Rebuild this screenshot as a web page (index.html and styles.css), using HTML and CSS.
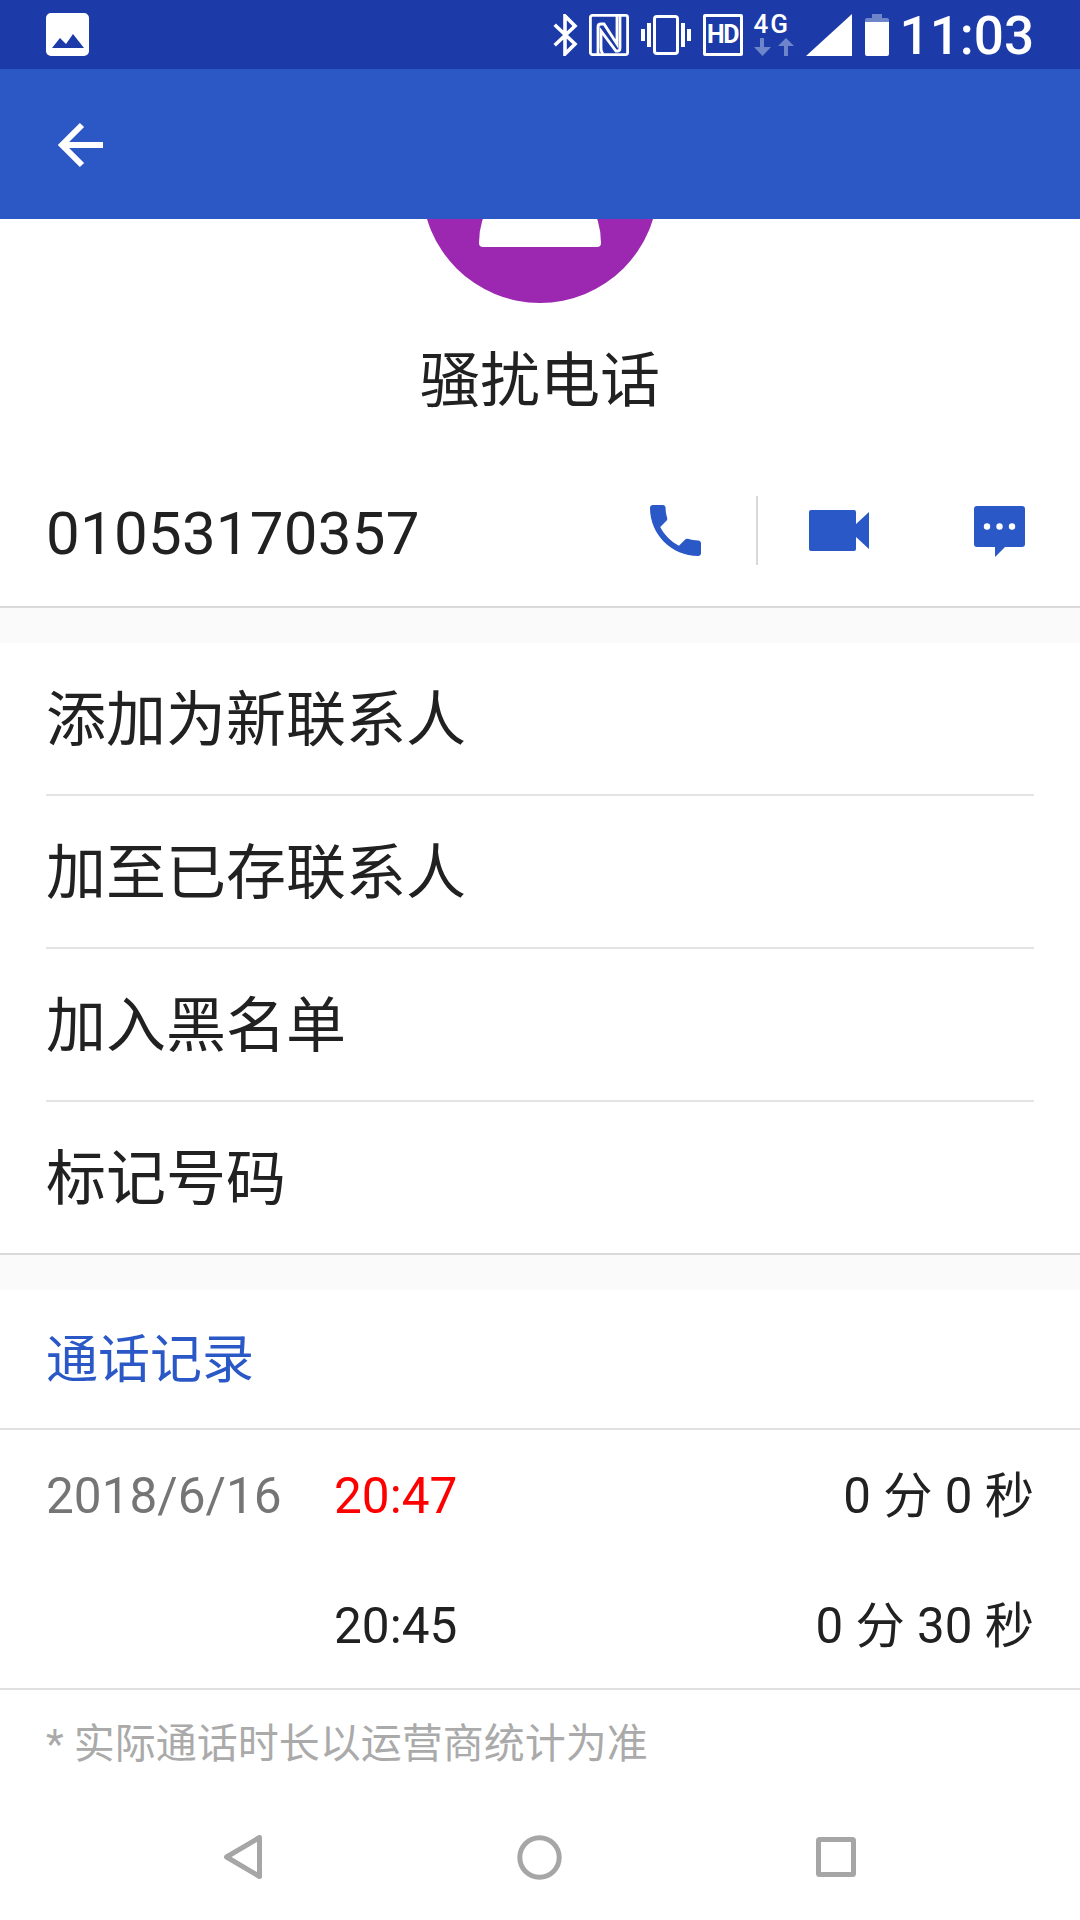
FILE: index.html
```html
<!DOCTYPE html>
<html lang="zh-CN">
<head>
<meta charset="utf-8">
<title>骚扰电话</title>
<link rel="stylesheet" href="styles.css">
</head>
<body>
<div class="screen">
  <header class="status-bar">
    <svg class="st-image" width="43" height="43" viewBox="0 0 43 43"><path fill="#fff" fill-rule="evenodd" d="M5 0h33a5 5 0 0 1 5 5v33a5 5 0 0 1-5 5H5a5 5 0 0 1-5-5V5a5 5 0 0 1 5-5zM6 35h32L27 21l-7 10-6-6z"/></svg>
    <div class="status-right">
      <svg width="25" height="42" viewBox="0 0 25 42"><path fill="none" stroke="#fff" stroke-width="3.600" stroke-linecap="square" d="M3 12l19 18-10 10V2l10 10L3 30"/></svg>
      <svg class="st-nfc" width="40" height="42" viewBox="0 0 40 42"><g fill="none" stroke="#fff" stroke-width="2.800"><rect x="1.400" y="1.400" width="37.200" height="39.200" rx="2"/><path d="M9 40V13q0-3 3-3h3l13 20V2"/><path d="M14 40q-2-2-2-6V17l15 20h2q2 0 2-3V2"/></g></svg>
      <svg width="52" height="40" viewBox="0 0 52 40"><g fill="#fff"><rect x="1" y="14" width="4" height="12"/><rect x="47" y="14" width="4" height="12"/><rect x="7" y="8" width="4" height="24"/><rect x="41" y="8" width="4" height="24"/></g><rect x="14.500" y="1.500" width="23" height="37" rx="2.500" fill="none" stroke="#fff" stroke-width="3"/></svg>
      <div class="st-hd">HD</div>
      <div class="st-net">
        <span class="st-4g">4G</span>
        <svg width="40" height="18" viewBox="0 0 40 18"><g fill="#6e85c9"><path d="M6 0h4v9h7l-8.500 9L0 9h6z"/><path d="M30 18h4V8h6L32 0l-8 8h6z"/></g></svg>
      </div>
      <svg class="st-signal" width="46" height="42" viewBox="0 0 46 42"><path fill="#fff" d="M46 0v42H0z"/></svg>
      <svg class="st-battery" width="24" height="42" viewBox="0 0 24 42"><path fill="#6e85c9" d="M7 0h10v4h5a2 2 0 0 1 2 2v3H0V6a2 2 0 0 1 2-2h5z"/><path fill="#fff" d="M0 8h24v32a2 2 0 0 1-2 2H2a2 2 0 0 1-2-2z"/></svg>
      <span class="st-time">11:03</span>
    </div>
  </header>
  <div class="toolbar">
    <svg width="72" height="72" viewBox="0 0 72 72"><path fill="none" stroke="#fff" stroke-width="6" d="M57 37H16M36 17L16 37l20 20"/></svg>
  </div>
  <main class="content">
    <div class="avatar">
      <div class="avatar-glyph"></div>
    </div>
    <h1 class="name">骚扰电话</h1>
    <section class="number-row">
      <span class="number">01053170357</span>
      <svg class="ic-phone" width="51" height="51" viewBox="3 3 18 18"><path fill="#2b58c7" d="M6.620 10.790c1.440 2.830 3.760 5.140 6.590 6.590l2.200-2.200c.27-.27.67-.36 1.020-.24 1.120.37 2.330.57 3.570.57.55 0 1 .45 1 1V20c0 .55-.45 1-1 1-9.390 0-17-7.610-17-17 0-.55.45-1 1-1h3.500c.55 0 1 .45 1 1 0 1.250.2 2.450.57 3.570.11.35.03.74-.25 1.020l-2.200 2.200z"/></svg>
      <span class="vline"></span>
      <svg class="ic-video" width="60" height="41" viewBox="0 0 60 41"><path fill="#2b58c7" d="M2 0h43a2 2 0 0 1 2 2v37a2 2 0 0 1-2 2H2a2 2 0 0 1-2-2V2a2 2 0 0 1 2-2zM47 14L60 2v37L47 27z"/></svg>
      <svg class="ic-msg" width="51" height="51" viewBox="0 0 51 51"><path fill="#2b58c7" fill-rule="evenodd" d="M3 0h45a3 3 0 0 1 3 3v35a3 3 0 0 1-3 3H31L21 51v-10H3a3 3 0 0 1-3-3V3a3 3 0 0 1 3-3z"/><g fill="#fff"><circle cx="13" cy="20.500" r="3.200"/><circle cx="25.500" cy="20.500" r="3.200"/><circle cx="38" cy="20.500" r="3.200"/></g></svg>
    </section>
    <div class="band"></div>
    <ul class="actions">
      <li class="action">添加为新联系人</li>
      <li class="action">加至已存联系人</li>
      <li class="action">加入黑名单</li>
      <li class="action">标记号码</li>
    </ul>
    <div class="band"></div>
    <h2 class="log-title">通话记录</h2>
    <div class="log">
      <div class="log-row">
        <span class="log-date">2018/6/16</span>
        <span class="log-time missed">20:47</span>
        <span class="log-dur">0 分 0 秒</span>
      </div>
      <div class="log-row">
        <span class="log-date"></span>
        <span class="log-time">20:45</span>
        <span class="log-dur">0 分 30 秒</span>
      </div>
    </div>
    <p class="note">* 实际通话时长以运营商统计为准</p>
  </main>
  <nav class="nav-bar">
    <svg width="38" height="44" viewBox="0 0 38 44"><path fill="none" stroke="#a6a6a6" stroke-width="5" stroke-linejoin="round" d="M35.500 2.500v39L2.500 22z"/></svg>
    <svg width="45" height="45" viewBox="0 0 45 45"><circle cx="22.500" cy="22.500" r="19.700" fill="none" stroke="#a6a6a6" stroke-width="5"/></svg>
    <svg width="40" height="40" viewBox="0 0 40 40"><rect x="2.500" y="2.500" width="35" height="35" rx="1" fill="none" stroke="#a6a6a6" stroke-width="5"/></svg>
  </nav>
</div>
</body>
</html>
```
FILE: styles.css
```css
* { box-sizing: border-box; }
html, body { margin: 0; padding: 0; }
body {
  background: #fff;
  color: #212121;
  font-family: Roboto, "Noto Sans CJK SC", sans-serif;
}
.screen {
  width: 1080px;
  height: 1920px;
  display: flex;
  flex-direction: column;
  overflow: hidden;
}
.status-bar {
  height: 69px;
  flex: none;
  background: #1d3aa9;
  display: flex;
  align-items: center;
  justify-content: space-between;
  padding: 0 46px;
}
.status-right {
  display: flex;
  align-items: center;
  gap: 11px;
}
.st-hd {
  width: 40px;
  height: 42px;
  border: 3px solid #fff;
  border-radius: 2px;
  color: #fff;
  font-size: 25px;
  font-weight: 700;
  line-height: 36px;
  text-align: center;
  letter-spacing: -1.500px;
}
.st-net {
  width: 40px;
  height: 42px;
  display: flex;
  flex-direction: column;
  justify-content: space-between;
}
.st-4g {
  color: #fff;
  font-size: 26px;
  font-weight: 500;
  line-height: 20px;
  letter-spacing: 2px;
  white-space: nowrap;
}
.st-signal { margin-left: 1px; }
.st-battery { margin-left: 2px; }
.st-time {
  color: #fff;
  font-size: 53px;
  font-weight: 500;
  line-height: 42px;
  padding-top: 3px;
}
.toolbar {
  height: 150px;
  flex: none;
  background: #2c58c6;
  display: flex;
  align-items: center;
  padding-left: 46px;
}
.content {
  flex: 1;
  min-height: 0;
  overflow: hidden;
}
.avatar {
  width: 236px;
  height: 236px;
  margin: -152px auto 0;
  border-radius: 50%;
  background: #9c27b0;
  display: flex;
  align-items: flex-end;
  justify-content: center;
  padding-bottom: 56px;
}
.avatar-glyph {
  width: 122px;
  height: 60px;
  background: #fff;
  border-radius: 40px 40px 4px 4px / 56px 56px 4px 4px;
  filter: blur(0.7px);
}
.name {
  margin: 40px 0 0;
  font-size: 60px;
  line-height: 78px;
  font-weight: 400;
  text-align: center;
}
.number-row {
  height: 148px;
  margin-top: 39px;
  padding: 0 55px 6px 46px;
  border-bottom: 2px solid #d9d9d9;
  display: flex;
  align-items: center;
}
.number {
  font-size: 60px;
  line-height: 70px;
  padding-top: 8px;
  letter-spacing: 0.250px;
  margin-right: auto;
}
.ic-phone { flex: none; margin-left: 1px; }
.vline {
  width: 2px;
  height: 69px;
  background: #d9d9d9;
  margin: 0 50px 0 55px;
}
.ic-video { flex: none; margin-left: 1px; }
.ic-msg { flex: none; margin: 3px 0 0 105px; }
.band {
  height: 35px;
  background: #fafafa;
}
.actions {
  list-style: none;
  margin: 0;
  padding: 0 46px;
  border-bottom: 2px solid #d9d9d9;
}
.action {
  height: 153px;
  padding-top: 4px;
  font-size: 60px;
  line-height: 147px;
  border-bottom: 2px solid #e4e4e4;
}
.action:last-child { height: 151px; border-bottom: 0; }
.log-title {
  margin: 0;
  height: 140px;
  padding: 3px 46px 0;
  font-size: 52px;
  line-height: 135px;
  font-weight: 400;
  color: #2b58c7;
  border-bottom: 2px solid #e0e0e0;
}
.log {
  height: 260px;
  padding: 34px 46px 0;
  border-bottom: 2px solid #e0e0e0;
  display: flex;
  flex-direction: column;
  gap: 66px;
}
.log-row {
  display: flex;
  font-size: 49.500px;
  line-height: 64px;
}
.log-date {
  width: 288px;
  color: #757575;
}
.log-time { flex: 1; }
.missed { color: #f00; }
.log-dur { font-size: 49.300px; text-align: right; }
.note {
  margin: 26px 0 0;
  padding: 0 46px;
  font-size: 41px;
  line-height: 56px;
  color: #aaa;
}
.nav-bar {
  height: 144px;
  flex: none;
  display: flex;
  align-items: center;
  justify-content: space-between;
  padding: 18px 224px 0;
}
```
